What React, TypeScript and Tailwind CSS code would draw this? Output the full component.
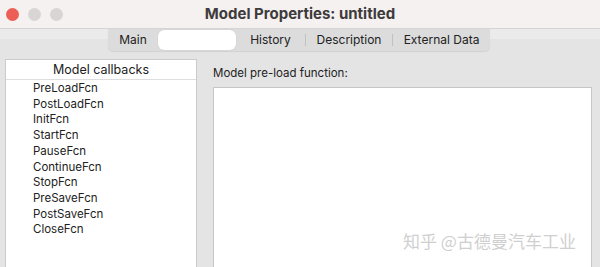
const callbacks = [
  "PreLoadFcn",
  "PostLoadFcn",
  "InitFcn",
  "StartFcn",
  "PauseFcn",
  "ContinueFcn",
  "StopFcn",
  "PreSaveFcn",
  "PostSaveFcn",
  "CloseFcn",
];

function TitleBar() {
  return (
    <div className="relative flex h-[29px] items-center border-b border-[#d8d4d3] bg-[#f4f1f0]">
      <div className="flex gap-[9px] pl-[6px]">
        <span className="h-[13px] w-[13px] rounded-full bg-[#ec5f57]" />
        <span className="h-[13px] w-[13px] rounded-full bg-[#d8d5d4]" />
        <span className="h-[13px] w-[13px] rounded-full bg-[#d8d5d4]" />
      </div>
      <div className="absolute inset-0 flex items-center justify-center pt-[1px] text-[15px] font-bold text-[#3d3b3b]">
        Model Properties: untitled
      </div>
    </div>
  );
}

function Tabs() {
  return (
    <div className="flex h-[22px] rounded-b-[5px] bg-[#dcdcdc] text-[12px] text-[#222] shadow-[0_1px_1px_rgba(0,0,0,0.08)]">
      <div className="flex w-[50px] items-center justify-center">Main</div>
      <div className="my-[1px] w-[78px] rounded-[6px] bg-white shadow-[0_0_1px_rgba(0,0,0,0.2)]" />
      <div className="flex w-[69px] items-center justify-center">History</div>
      <div className="my-[5px] w-px bg-[#c2c2c2]" />
      <div className="flex w-[86px] items-center justify-center">Description</div>
      <div className="my-[5px] w-px bg-[#c2c2c2]" />
      <div className="flex w-[97px] items-center justify-center">External Data</div>
    </div>
  );
}

export default function App() {
  return (
    <div className="relative h-[267px] w-[600px] overflow-hidden bg-[#e4e4e4] font-['Inter','Liberation_Sans',sans-serif]">
      <TitleBar />
      <div className="h-[10px] bg-[#ebebeb]" />
      <div className="-mt-[10px] flex pl-[108px]">
        <Tabs />
      </div>
      <div className="mt-[8px] flex gap-[16px] pl-[5px]">
        <div className="h-[220px] w-[192px] border border-[#cbcbcb] bg-white">
          <div className="flex h-[20px] items-center justify-center border-b border-[#dedede] pt-[1px] text-[12.5px] text-[#1c1c1c]">
            Model callbacks
          </div>
          <div className="flex flex-col pl-[27px] pt-[1px] text-[11.5px] leading-[15.7px] text-[#222]">
            {callbacks.map((c) => (
              <div key={c}>{c}</div>
            ))}
          </div>
        </div>
        <div className="flex flex-col">
          <div className="pt-[6px] text-[11.5px] text-[#222]">Model pre-load function:</div>
          <div className="mt-[5px] h-[200px] w-[379px] border border-[#c6c6c6] bg-white" />
        </div>
      </div>
      <div className="absolute left-[403px] top-[228px] font-['Noto_Sans_CJK_SC',sans-serif] text-[17px] text-[#cfcfcf] [text-shadow:0_0_1px_#fff]">
        知乎 @古德曼汽车工业
      </div>
    </div>
  );
}
